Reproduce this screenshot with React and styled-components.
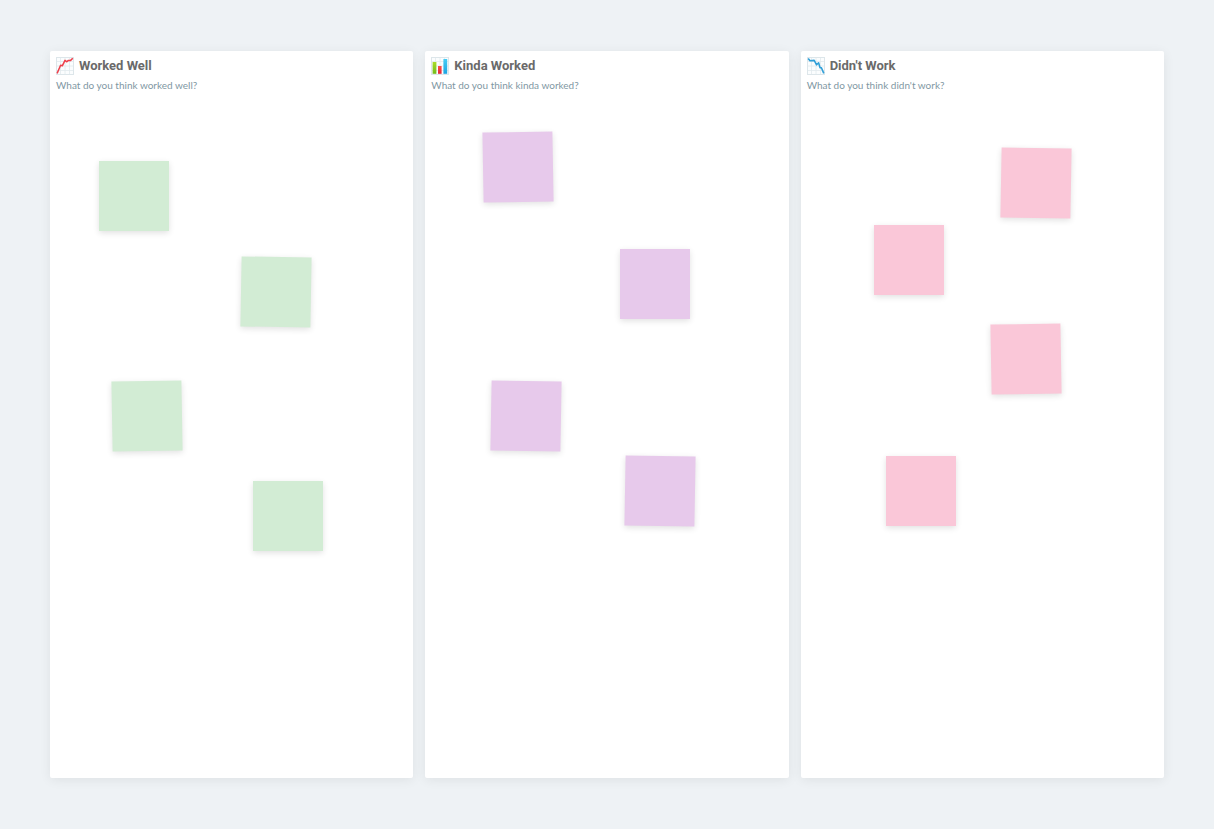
import React from "react";
import styled, { createGlobalStyle } from "styled-components";

const GlobalStyle = createGlobalStyle`
    * {
        box-sizing: border-box;
    }

    body {
        margin: 0;
        background-color: #eef2f5;
        font-family: "Noto Sans", "Liberation Sans", sans-serif;
    }
`;

const StyledBoard = styled.main`
    display: flex;
    gap: 12px;
    min-height: 100vh;
    padding: 51px 50px;
`;

const StyledColumn = styled.section`
    position: relative;
    flex: 1 1 0;
    min-width: 0;
    padding: 5px 6px;
    background-color: white;
    border-radius: 2px;
    box-shadow: 0 2px 12px rgba(0, 0, 0, 0.07);
`;

const StyledHeader = styled.header`
    display: flex;
    align-items: center;
    gap: 5px;
    height: 20px;
`;

const StyledTitle = styled.h2`
    margin: 0;
    color: #6a6a6a;
    font-family: Roboto, "Noto Sans", sans-serif;
    font-size: 13px;
    font-weight: 700;
    line-height: 22px;
`;

const StyledQuestion = styled.p`
    margin: 2px 0 0 0;
    color: #7f98a3;
    font-family: Lato, "Noto Sans", sans-serif;
    font-size: 10px;
    line-height: 14px;
`;

const StyledNote = styled.article`
    position: absolute;
    left: ${({ $x }) => $x}px;
    top: ${({ $y }) => $y}px;
    width: 70px;
    height: 70px;
    background-color: ${({ $color }) => $color};
    box-shadow: 0 2px 6px rgba(0, 0, 0, 0.12);
    transform: rotate(${({ $tilt }) => $tilt}deg);
`;

const StyledIcon = styled.svg`
    display: block;
    flex: none;
    width: 18px;
    height: 18px;
`;

const ChartPaper = () => (
    <>
        <rect x="0.5" y="0.5" width="17" height="17" fill="#fbfdfe" stroke="#dde6ea" />
        <path
            d="M4.5 1v16M9 1v16M13.5 1v16M1 4.5h16M1 9h16M1 13.5h16"
            fill="none"
            stroke="#e2eaee"
            strokeWidth="0.8"
        />
    </>
);

const ChartIcon = ({ type }) => (
    <StyledIcon viewBox="0 0 18 18" aria-hidden="true">
        <ChartPaper />
        {type === "up" && (
            <path
                d="M1.1 16.4L4.6 8.2L6.3 8.8L9 3.3L10.6 4.8L12.4 3.4L14.6 3.4L16.8 1.2"
                fill="none"
                stroke="#ee3f4b"
                strokeWidth="1.5"
                strokeLinejoin="round"
            />
        )}
        {type === "down" && (
            <path
                d="M1.2 1.4L3 3.8L7.2 3.4L9.6 7.8L11.6 5.8L13 10.6L14.4 10.8L16.8 16.4"
                fill="none"
                stroke="#2f9fd8"
                strokeWidth="1.6"
                strokeLinejoin="round"
            />
        )}
        {type === "bars" && (
            <>
                <defs>
                    <linearGradient id="bar-green" x1="0" y1="0" x2="0" y2="1">
                        <stop offset="0" stopColor="#a9dc28" />
                        <stop offset="1" stopColor="#72bb1a" />
                    </linearGradient>
                    <linearGradient id="bar-red" x1="0" y1="0" x2="0" y2="1">
                        <stop offset="0" stopColor="#ff5148" />
                        <stop offset="1" stopColor="#e52438" />
                    </linearGradient>
                    <linearGradient id="bar-blue" x1="0" y1="0" x2="0" y2="1">
                        <stop offset="0" stopColor="#46cdf5" />
                        <stop offset="1" stopColor="#1ca4e2" />
                    </linearGradient>
                </defs>
                <rect x="1.6" y="5" width="3.8" height="11.8" fill="url(#bar-green)" />
                <rect x="7" y="9" width="3.6" height="7.8" fill="url(#bar-red)" />
                <rect x="12.4" y="2" width="3.8" height="14.8" fill="url(#bar-blue)" />
            </>
        )}
    </StyledIcon>
);

const columns = [
    {
        title: "Worked Well",
        question: "What do you think worked well?",
        icon: "up",
        color: "#d2ecd4",
        notes: [
            { x: 49, y: 110, tilt: 0 },
            { x: 191, y: 206, tilt: 1 },
            { x: 62, y: 330, tilt: -1 },
            { x: 203, y: 430, tilt: 0 },
        ],
    },
    {
        title: "Kinda Worked",
        question: "What do you think kinda worked?",
        icon: "bars",
        color: "#e7c9eb",
        notes: [
            { x: 58, y: 81, tilt: -1 },
            { x: 195, y: 198, tilt: 0 },
            { x: 66, y: 330, tilt: 1 },
            { x: 200, y: 405, tilt: 1 },
        ],
    },
    {
        title: "Didn't Work",
        question: "What do you think didn't work?",
        icon: "down",
        color: "#fac7d8",
        notes: [
            { x: 200, y: 97, tilt: 1 },
            { x: 73, y: 174, tilt: 0 },
            { x: 190, y: 273, tilt: -1 },
            { x: 85, y: 405, tilt: 0 },
        ],
    },
];

const Column = ({ title, question, icon, color, notes }) => (
    <StyledColumn>
        <StyledHeader>
            <ChartIcon type={icon} />
            <StyledTitle>{title}</StyledTitle>
        </StyledHeader>
        <StyledQuestion>{question}</StyledQuestion>
        {notes.map((note) => (
            <StyledNote
                key={`${note.x}-${note.y}`}
                $x={note.x}
                $y={note.y}
                $tilt={note.tilt}
                $color={color}
            />
        ))}
    </StyledColumn>
);

const App = () => (
    <>
        <GlobalStyle />
        <StyledBoard>
            {columns.map((column) => (
                <Column key={column.title} {...column} />
            ))}
        </StyledBoard>
    </>
);

export default App;
